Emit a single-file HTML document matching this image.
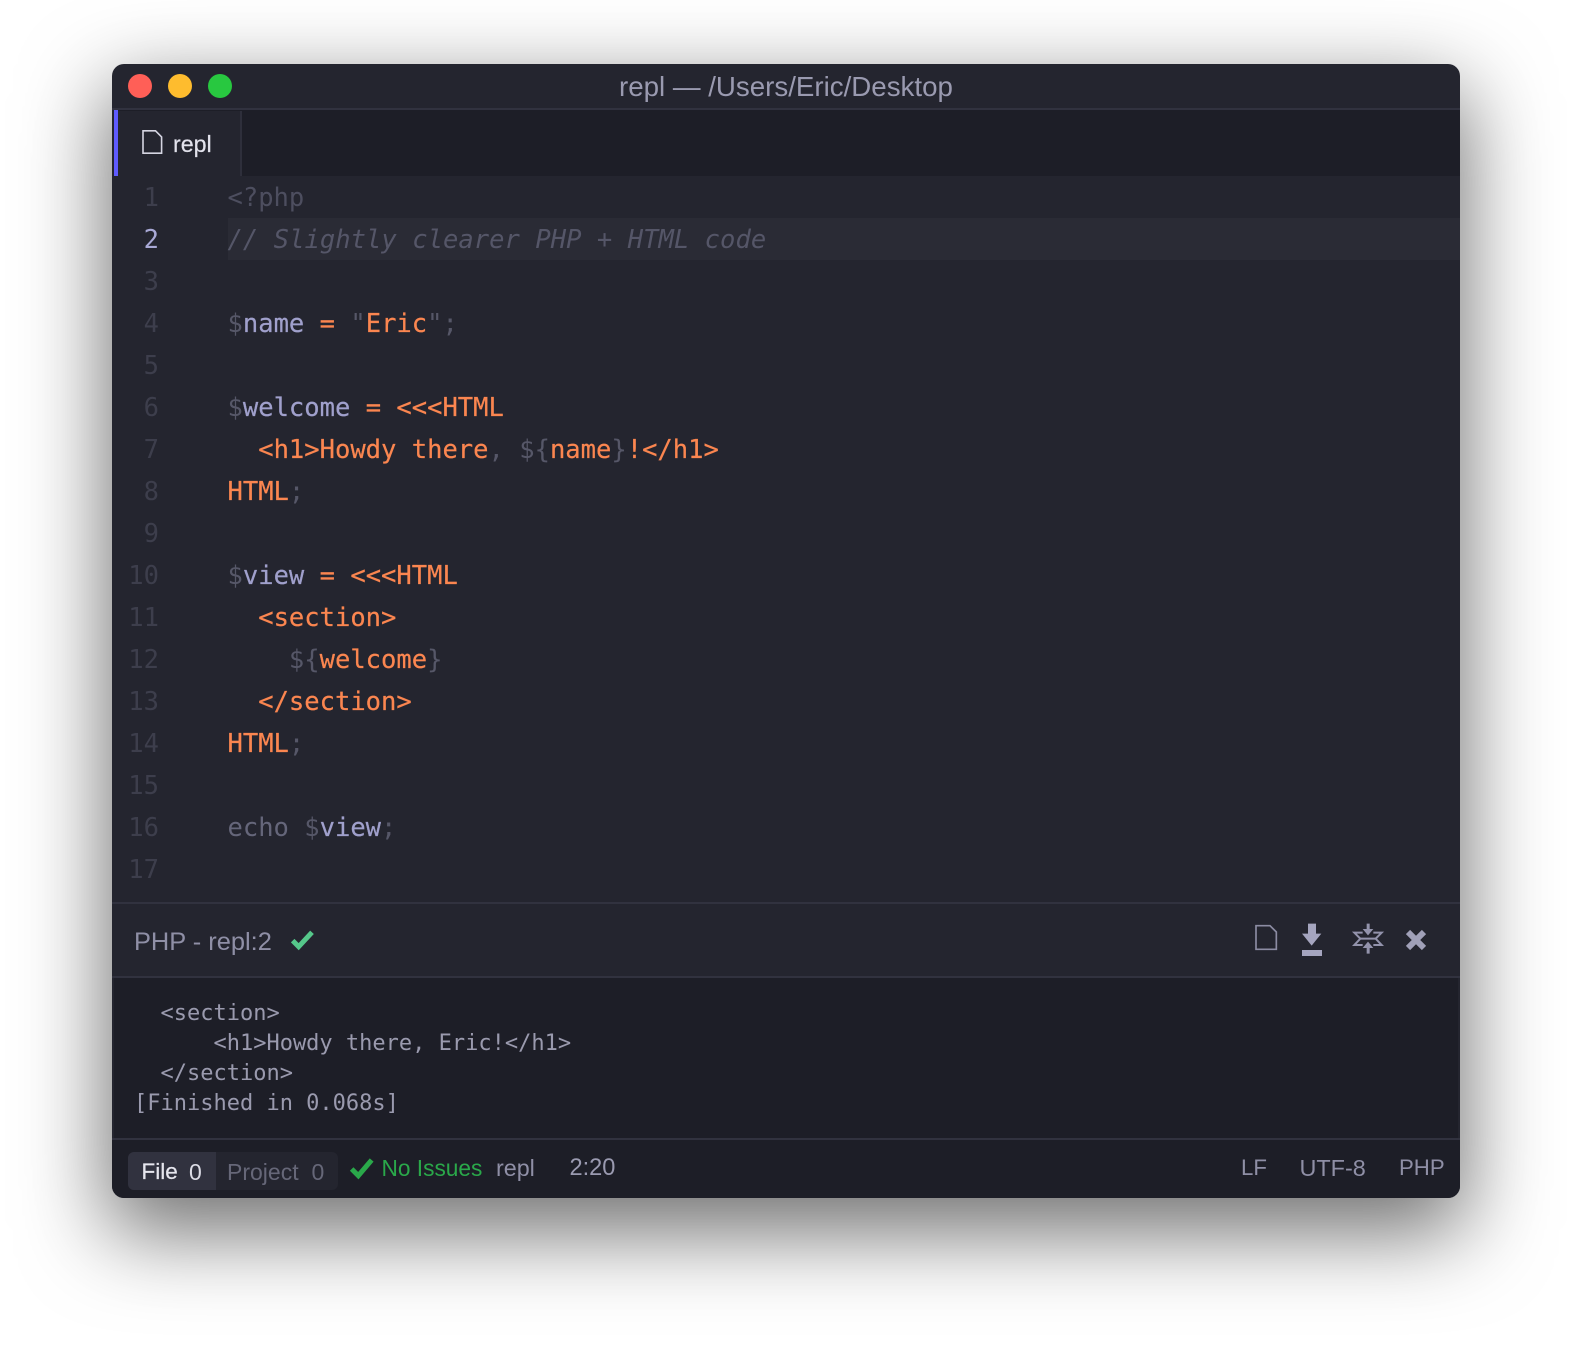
<!DOCTYPE html>
<html><head><meta charset="utf-8"><style>
html,body{margin:0;padding:0;background:#fff}
body{width:1572px;height:1358px;position:relative;overflow:hidden;font-family:"Liberation Sans",sans-serif}
.a{position:absolute}
#win{left:112px;top:64px;width:1348px;height:1134px;border-radius:12px;background:#24252f;box-shadow:0 30px 85px 5px rgba(0,0,0,.56)}
.t{position:absolute;white-space:pre;line-height:1}
.c{position:absolute;left:227.5px;height:42px;white-space:pre;font:25.5px/42px "DejaVu Sans Mono",monospace;color:#565768;margin-top:1px}
.n{position:absolute;left:112px;width:47px;text-align:right;font:25.5px/42px "DejaVu Sans Mono",monospace;color:#3d3e4c;margin-top:1px}
.o{color:#fb8650;-webkit-text-stroke:.2px #fb8650}.v{color:#a0a0cc;-webkit-text-stroke:.2px #a0a0cc}.s{color:#565768}
.p{position:absolute;white-space:pre;font:22px/30px "DejaVu Sans Mono",monospace;color:#9a9aae}
.g{color:#9a9ab0}
</style></head><body>
<div class="a" id="win"></div>
<div class="a" style="left:112px;top:110px;width:1348px;height:66px;background:#1d1e27"></div>
<div class="a" style="left:112px;top:108px;width:1348px;height:2px;background:#31323f"></div>
<div class="a" style="left:118px;top:111px;width:124px;height:65px;background:#24252f;border-right:2px solid #2e2f3b;box-sizing:border-box"></div>
<div class="a" style="left:112px;top:110px;width:2px;height:66px;background:#24252f"></div>
<div class="a" style="left:114px;top:110px;width:4px;height:66px;background:#5f5bff"></div>
<div class="a" style="left:128px;top:74px;width:24px;height:24px;border-radius:50%;background:#ff5f57"></div>
<div class="a" style="left:168px;top:74px;width:24px;height:24px;border-radius:50%;background:#febc2e"></div>
<div class="a" style="left:208px;top:74px;width:24px;height:24px;border-radius:50%;background:#28c840"></div>
<div class="t g" style="left:619px;top:73px;font-size:27.7px;color:#9a9ab0">repl — /Users/Eric/Desktop</div>
<svg class="a" style="left:140px;top:128px" width="24" height="28" viewBox="0 0 24 28"><path d="M3 2.8H15.5L21.6 9V25.2H3Z" fill="none" stroke="#d5d5e2" stroke-width="1.6"/></svg>
<div class="t" style="left:173px;top:133px;font-size:23.2px;color:#e2e2ec;-webkit-text-stroke:.2px #e2e2ec">repl</div>

<div class="a" style="left:228px;top:218px;width:1232px;height:42px;background:#2a2b35"></div>
<div class="n" style="top:176px">1</div>
<div class="n" style="top:218px;color:#a9a9d6">2</div>
<div class="n" style="top:260px">3</div>
<div class="n" style="top:302px">4</div>
<div class="n" style="top:344px">5</div>
<div class="n" style="top:386px">6</div>
<div class="n" style="top:428px">7</div>
<div class="n" style="top:470px">8</div>
<div class="n" style="top:512px">9</div>
<div class="n" style="top:554px">10</div>
<div class="n" style="top:596px">11</div>
<div class="n" style="top:638px">12</div>
<div class="n" style="top:680px">13</div>
<div class="n" style="top:722px">14</div>
<div class="n" style="top:764px">15</div>
<div class="n" style="top:806px">16</div>
<div class="n" style="top:848px">17</div>

<div class="c" style="top:176px;color:#4d4e5f">&lt;?php</div>
<div class="c" style="top:218px;font-style:italic;color:#555668;letter-spacing:.04px">// Slightly clearer PHP + HTML code</div>
<div class="c" style="top:302px"><span class="s">$</span><span class="v">name</span> <span class="o">=</span> <span class="s">"</span><span class="o">Eric</span><span class="s">";</span></div>
<div class="c" style="top:386px"><span class="s">$</span><span class="v">welcome</span> <span class="o">= &lt;&lt;&lt;HTML</span></div>
<div class="c" style="top:428px">  <span class="o">&lt;h1&gt;Howdy there</span>, ${<span class="o">name</span>}<span class="o">!&lt;/h1&gt;</span></div>
<div class="c" style="top:470px"><span class="o">HTML</span>;</div>
<div class="c" style="top:554px"><span class="s">$</span><span class="v">view</span> <span class="o">= &lt;&lt;&lt;HTML</span></div>
<div class="c" style="top:596px">  <span class="o">&lt;section&gt;</span></div>
<div class="c" style="top:638px">    ${<span class="o">welcome</span>}</div>
<div class="c" style="top:680px">  <span class="o">&lt;/section&gt;</span></div>
<div class="c" style="top:722px"><span class="o">HTML</span>;</div>
<div class="c" style="top:806px;color:#65667a">echo <span class="s">$</span><span class="v">view</span><span class="s">;</span></div>

<div class="a" style="left:112px;top:902px;width:1348px;height:2px;background:#31323f"></div>
<div class="t" style="left:134px;top:930px;font-size:25.4px;color:#8f8fa6">PHP - repl:2</div>
<svg class="a" style="left:110px;top:890px" width="300" height="100" viewBox="0 0 900 300"><path d="M548 152L566 170L606 127" fill="none" stroke="#55c78a" stroke-width="15"/></svg>
<svg class="a" style="left:1220px;top:890px" width="250" height="100" viewBox="0 0 750 300">
<path d="M108 107H150L169 126V178H108Z" fill="none" stroke="#8c8ca3" stroke-width="5"/>
<path d="M264 101H288V131H304L275 167L246 131H264Z" fill="#a5a5bf"/>
<rect x="246" y="180" width="60" height="18" fill="#a5a5bf"/>
<path d="M440 101H449V117H460L444 136L428 117H440Z" fill="#9393ac"/>
<path d="M440 191H449V174H460L444 155L428 174H440Z" fill="#9393ac"/>
<path d="M428 128H403L421 146L403 165H428M460 128H485L467 146L485 165H460M421 146H467" fill="none" stroke="#9393ac" stroke-width="6"/>
<path d="M564 126L612 174M612 126L564 174" fill="none" stroke="#a0a0b8" stroke-width="18"/>
</svg>

<div class="a" style="left:114px;top:978px;width:1344px;height:160px;background:#1d1e27"></div>
<div class="a" style="left:112px;top:976px;width:1348px;height:2px;background:#31323f"></div>
<div class="p" style="left:134px;top:999px">  &lt;section&gt;</div>
<div class="p" style="left:134px;top:1029px">      &lt;h1&gt;Howdy there, Eric!&lt;/h1&gt;</div>
<div class="p" style="left:134px;top:1059px">  &lt;/section&gt;</div>
<div class="p" style="left:134px;top:1089px">[Finished in 0.068s]</div>

<div class="a" style="left:112px;top:1138px;width:1348px;height:60px;background:#1d1e27;border-radius:0 0 12px 12px"></div>
<div class="a" style="left:112px;top:1138px;width:1348px;height:2px;background:#31323f"></div>
<div class="a" style="left:128px;top:1152px;width:210px;height:38px;border-radius:6px;background:#24252f"></div>
<div class="a" style="left:128px;top:1152px;width:88px;height:38px;border-radius:6px 0 0 6px;background:#31323f"></div>
<div class="t" style="left:141.5px;top:1161px;font-size:22.5px;color:#e6e6ee;-webkit-text-stroke:.2px #e6e6ee">File</div>
<div class="t" style="left:189px;top:1161px;font-size:23px;color:#dcdce6">0</div>
<div class="t" style="left:227px;top:1161px;font-size:23px;color:#666778">Project</div>
<div class="t" style="left:311.5px;top:1161px;font-size:23px;color:#666778">0</div>
<svg class="a" style="left:110px;top:1130px" width="520" height="80" viewBox="0 0 1560 240"><path d="M725 117L745 137L785 90" fill="none" stroke="#2aa84a" stroke-width="15"/></svg>
<div class="t" style="left:381.5px;top:1157px;font-size:22.7px;color:#2aa84a">No Issues</div>
<div class="t" style="left:496px;top:1157px;font-size:23.3px;color:#8f8fa6">repl</div>
<div class="t" style="left:569.5px;top:1157px;font-size:23.6px;color:#9a9ab0">2:20</div>
<div class="t" style="left:1241px;top:1157px;font-size:22.2px;color:#8f8fa6">LF</div>
<div class="t" style="left:1299.5px;top:1157px;font-size:23.4px;color:#8f8fa6">UTF-8</div>
<div class="t" style="left:1399px;top:1157px;font-size:22.2px;color:#8f8fa6">PHP</div>
</body></html>
